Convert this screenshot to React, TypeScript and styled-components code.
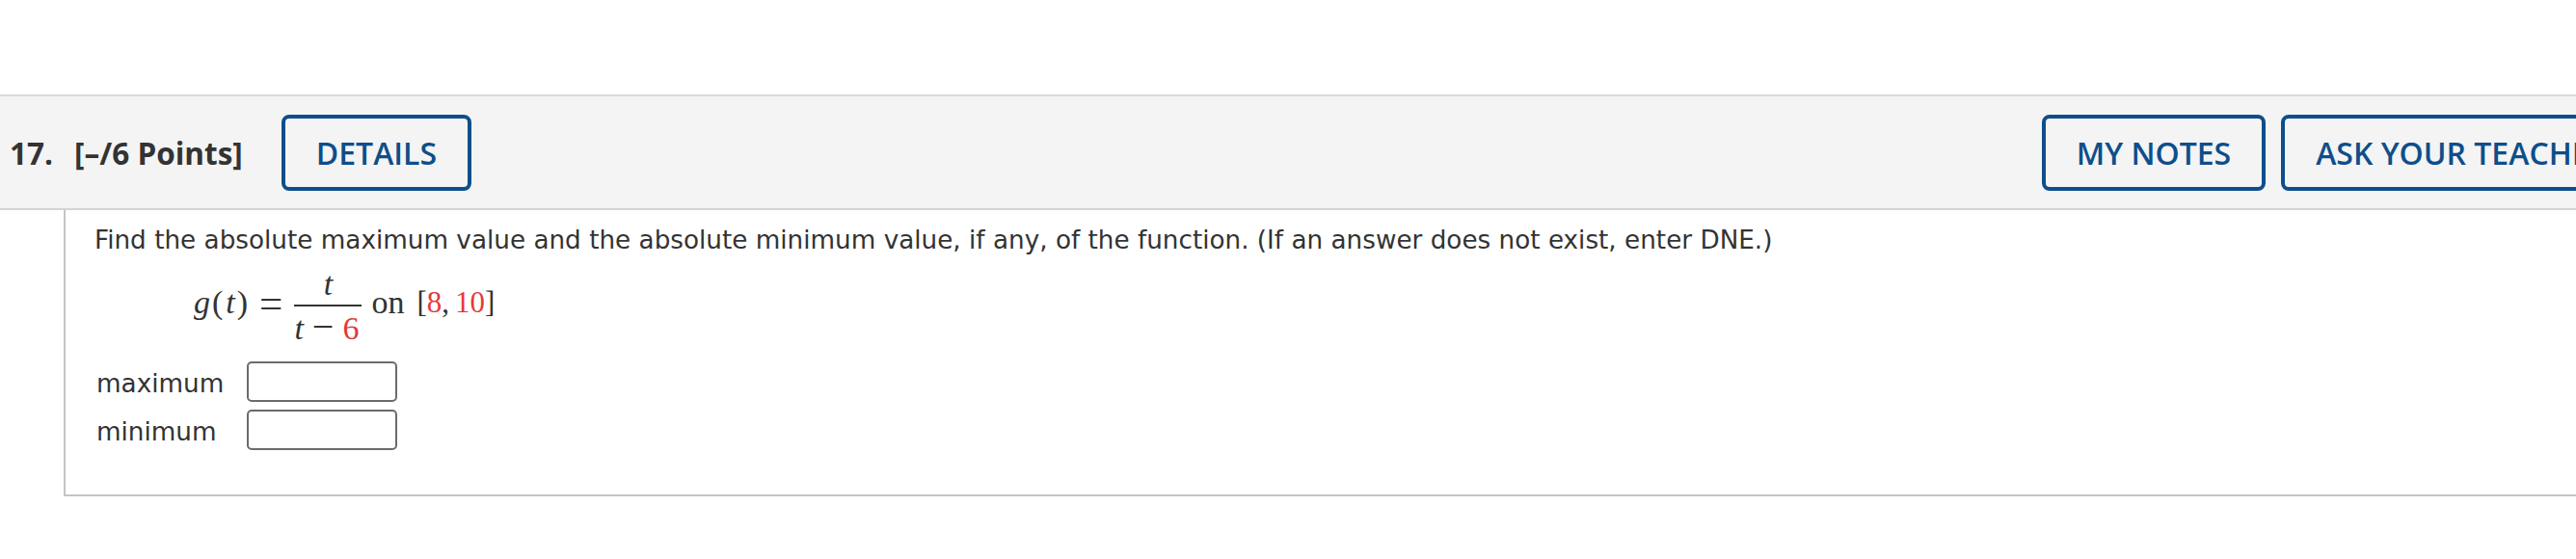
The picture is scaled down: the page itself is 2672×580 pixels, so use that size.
import styled, { createGlobalStyle } from 'styled-components';

const GlobalStyle = createGlobalStyle`
    html, body {
        margin: 0;
        padding: 0;
        background: #fff;
        overflow: hidden;
    }
`

const blue = "#0e4e8a";
const red = "#e5383b";

export default function App() {
    return (
        <>
            <GlobalStyle />
            <Page>
                <QuestionHeader>
                    <Title>
                        <Number>17.</Number>
                        <Points>[–/6 Points]</Points>
                    </Title>
                    <OutlineButton>DETAILS</OutlineButton>
                    <RightTools>
                        <OutlineButton>MY NOTES</OutlineButton>
                        <OutlineButton>ASK YOUR TEACHER</OutlineButton>
                    </RightTools>
                </QuestionHeader>

                <QuestionBody>
                    <Prompt>
                        Find the absolute maximum value and the absolute minimum value, if any, of the function. (If an answer does not exist, enter DNE.)
                    </Prompt>

                    <MathRow>
                        <Glyph $italic $gap={2}>g</Glyph>
                        <Glyph $gap={3}>(</Glyph>
                        <Glyph $italic $gap={2}>t</Glyph>
                        <Glyph $gap={2}>)</Glyph>
                        <Rel>=</Rel>
                        <Fraction>
                            <Numerator><Var>t</Var></Numerator>
                            <Denominator>
                                <Var>t</Var>
                                <BinOp>−</BinOp>
                                <Red>6</Red>
                            </Denominator>
                        </Fraction>
                        <Word>on</Word>
                        <Interval>
                            <Glyph>[</Glyph>
                            <Glyph $red>8</Glyph>
                            <Glyph $gap={6}>,</Glyph>
                            <Glyph $red>10</Glyph>
                            <Glyph>]</Glyph>
                        </Interval>
                    </MathRow>

                    <AnswerGrid>
                        <Label>maximum</Label>
                        <AnswerInput type="text" />
                        <Label>minimum</Label>
                        <AnswerInput type="text" />
                    </AnswerGrid>
                </QuestionBody>
            </Page>
        </>
    )
}

const Page = styled.div`
    width: 2752px;
    padding-top: 98px;
`

const QuestionHeader = styled.div`
    height: 116px;
    background: #f4f4f4;
    border-top: 2px solid #dadada;
    border-bottom: 2px solid #d4d4d4;
    padding: 0 10px;

    display: flex;
    align-items: center;
    flex-direction: row;
`

const Title = styled.div`
    font-family: "Open Sans", sans-serif;
    font-weight: 700;
    font-size: 31.5px;
    color: #333;
    margin-right: 40px;

    display: flex;
    gap: 22px;
`

const Number = styled.span``

const Points = styled.span``

const RightTools = styled.div`
    margin-left: auto;
    display: flex;
    gap: 16px;
`

const OutlineButton = styled.button`
    height: 79px;
    padding: 0 32px;
    background: transparent;
    border: 4px solid ${blue};
    border-radius: 8px;
    color: ${blue};
    font-family: "Open Sans", sans-serif;
    font-weight: 600;
    font-size: 32px;
    white-space: nowrap;
`

const QuestionBody = styled.div`
    margin-left: 66px;
    border-left: 2px solid #c4c4c4;
    border-bottom: 2px solid #c4c4c4;
    padding: 13px 0 46px 30px;
    color: #333;
`

const Prompt = styled.p`
    margin: 0;
    font-family: "DejaVu Sans", Verdana, sans-serif;
    font-size: 26.25px;
    line-height: 36px;
`

const MathRow = styled.div`
    margin: 11px 0 0 103px;
    height: 80px;
    display: flex;
    align-items: center;
    font-family: "Liberation Serif", "Times New Roman", serif;
    font-size: 34px;
    line-height: 34px;
    color: #333;
`

const Glyph = styled.span<{ $italic?: boolean; $gap?: number; $red?: boolean }>`
    padding-bottom: 9px;
    font-style: ${({ $italic }) => ($italic ? "italic" : "normal")};
    margin-right: ${({ $gap }) => $gap ?? 0}px;
    color: ${({ $red }) => ($red ? red : "inherit")};
`

const Interval = styled.span`
    display: flex;
    align-items: center;
    font-size: 31px;
    line-height: 31px;
`

const Var = styled.span`
    font-style: italic;
`

const Rel = styled.span`
    font-size: 43px;
    line-height: 43px;
    padding-bottom: 7px;
    margin: 0 12px 0 10px;
`

const BinOp = styled.span`
    font-size: 40px;
    margin: 0 9px;
`

const Red = styled.span`
    color: ${red};
`

const Word = styled.span`
    padding-bottom: 9px;
    margin: 0 13px 0 10px;
`

const Fraction = styled.span`
    display: inline-flex;
    flex-direction: column;
    align-items: center;
`

const Numerator = styled.span`
    padding-bottom: 4px;
`

const Denominator = styled.span`
    border-top: 2.5px solid #333;
    padding: 4px 3px 0 0;
`

const AnswerGrid = styled.div`
    margin-top: 17px;
    display: grid;
    grid-template-columns: 158px 156px;
    row-gap: 8px;
    align-items: center;
`

const Label = styled.span`
    font-family: "DejaVu Sans", Verdana, sans-serif;
    font-size: 26.25px;
    color: #333;
    padding: 3px 0 0 2px;
`

const AnswerInput = styled.input`
    box-sizing: border-box;
    width: 156px;
    height: 42px;
    border: 2px solid #6b6b6b;
    border-radius: 5px;
    background: #fff;
`
